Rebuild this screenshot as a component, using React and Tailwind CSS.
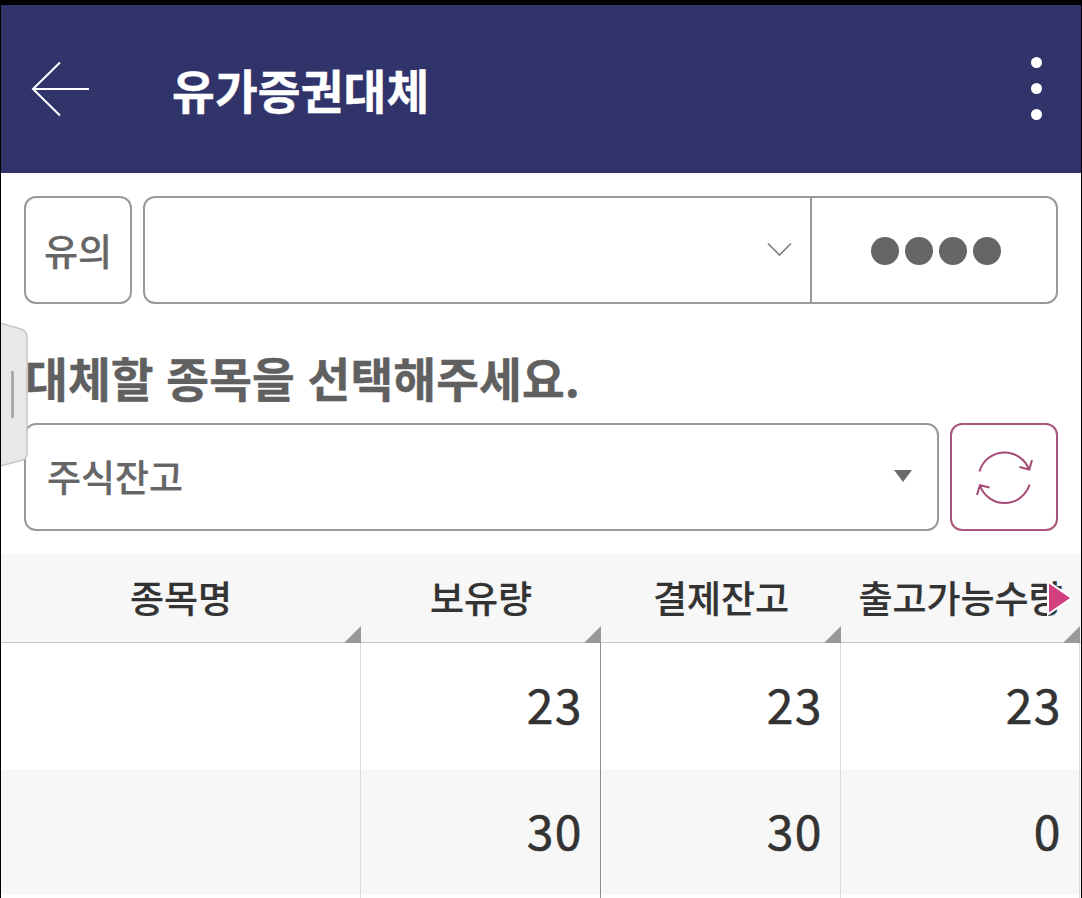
const COLUMNS = [
  { key: 'name', label: '종목명', line: 'border-[#d9d9d9]' },
  { key: 'held', label: '보유량', line: 'border-[#8e8e8e]' },
  { key: 'settled', label: '결제잔고', line: 'border-[#d9d9d9]' },
  { key: 'available', label: '출고가능수량', line: 'border-[#d9d9d9]' },
]

const ROWS = [
  { name: '', held: 23, settled: 23, available: 23 },
  { name: '', held: 30, settled: 30, available: 0 },
  { name: '', held: '', settled: '', available: '' },
]

function Header() {
  return (
    <header className="flex h-[168px] shrink-0 items-center bg-[#31346a] pl-[30px] pr-[39px]">
      <button aria-label="뒤로">
        <svg width="60" height="58" viewBox="0 0 60 58" fill="none" stroke="#fff" strokeWidth="2">
          <path d="M29 2.500 2 29 29 55.500M2 29h56" />
        </svg>
      </button>
      <h1 className="ml-[81px] text-[46.5px] leading-[60px] font-bold tracking-[0.1px] text-white [-webkit-text-stroke:0.4px]">유가증권대체</h1>
      <button aria-label="메뉴" className="-mt-[2px] ml-auto flex flex-col gap-[15px]">
        <span className="size-[11px] rounded-full bg-white" />
        <span className="size-[11px] rounded-full bg-white" />
        <span className="size-[11px] rounded-full bg-white" />
      </button>
    </header>
  )
}

function AccountBar() {
  return (
    <div className="flex h-[108px] gap-[11px]">
      <button className="flex w-[108px] items-center justify-center rounded-xl border-2 border-[#999] pt-[2px] text-[37px] font-medium text-[#666] [-webkit-text-stroke:0.2px]">
        유의
      </button>
      <div className="flex flex-1 rounded-xl border-2 border-[#999]">
        <div className="flex flex-1 items-center justify-end border-r-2 border-[#999] pr-[18px]">
          <svg width="26" height="16" viewBox="0 0 26 16" fill="none" stroke="#808080" strokeWidth="1.7">
            <path d="M2 1.5 13.500 13 25 1.5" />
          </svg>
        </div>
        <div className="flex w-[244px] items-center justify-center gap-[6px] pt-[2px] pl-[3px]">
          {[0, 1, 2, 3].map(i => (
            <span key={i} className="size-[28px] rounded-full bg-[#666]" />
          ))}
        </div>
      </div>
    </div>
  )
}

function RefreshIcon() {
  return (
    <svg width="60" height="60" viewBox="0 0 60 60" fill="none" stroke="#a54a74" strokeWidth="2">
      <path d="M5.500 24.500A26 26 0 0 1 55 22.500M45.500 20 55.300 22.500 58 13" />
      <path d="M55.500 37.500A26 26 0 0 1 6 38.500M3 48 6 38.300 15.500 40.500" />
    </svg>
  )
}

function BalanceTable() {
  return (
    <div className="relative mt-[23px]">
      <div className="grid h-[89px] grid-cols-[360px_240px_240px_239px] border-b border-[#c8c8c8] bg-[#f7f7f7]">
        {COLUMNS.map(col => (
          <div key={col.key} className="relative flex items-center justify-center text-[37px] font-medium whitespace-nowrap text-[#333] [-webkit-text-stroke:0.2px]">
            {col.label}
            <span className="absolute right-0 -bottom-px size-[17px] bg-[#999] [clip-path:polygon(100%_0,100%_100%,0_100%)]" />
          </div>
        ))}
      </div>
      {ROWS.map((row, i) => (
        <div key={i} className="grid h-[126px] grid-cols-[360px_240px_240px_239px] even:bg-white odd:bg-[#f7f7f7] last-of-type:bg-white">
          {COLUMNS.map(col => (
            <div
              key={col.key}
              className={`flex items-center justify-end border-r pr-[17px] pb-[6px] text-[48px] tracking-[1.5px] text-[#333] [-webkit-text-stroke:0.6px] ${col.line}`}
            >
              {row[col.key]}
            </div>
          ))}
        </div>
      ))}
      <svg className="absolute top-[26px] right-[9px]" width="28" height="36" viewBox="0 0 28 36">
        <path d="M5 3.500 26 18 5 32.500z" fill="#d13f7e" stroke="#fff" strokeWidth="4" paintOrder="stroke" />
      </svg>
    </div>
  )
}

function DrawerHandle() {
  return (
    <svg className="absolute top-[317px] left-0" width="28" height="146" viewBox="0 0 28 146" fill="none">
      <path d="M-1 1 20 7Q26 9 26 15V131Q26 136.500 22 138L-1 144z" fill="#e8e8e8" stroke="#c6c6c6" strokeWidth="1.500" />
      <path d="M11.500 50V95" stroke="#a3a3a3" strokeWidth="2.600" strokeLinecap="round" />
    </svg>
  )
}

export default function App() {
  return (
    <div className="h-[898px] w-[1082px] overflow-hidden border-x border-t-[5px] border-black bg-white font-['Noto_Sans_CJK_KR',sans-serif]">
      <div className="relative flex h-full flex-col">
        <Header />
        <main className="px-[23px] pt-[23px]">
          <AccountBar />
          <h2 className="mt-[43px] h-[60px] pl-px text-[46.5px] leading-[60px] font-bold tracking-[0.1px] [word-spacing:2px] text-[#606060] [-webkit-text-stroke:0.4px]">
            대체할 종목을 선택해주세요.
          </h2>
          <div className="mt-[16px] flex h-[108px] gap-[11px]">
            <div className="flex flex-1 items-center justify-between rounded-xl border-2 border-[#999] pr-[25px] pl-[21px] text-[37px] font-medium text-[#666] [-webkit-text-stroke:0.2px]">
              주식잔고
              <span className="mb-[2px] h-[12px] w-[18px] bg-[#6b6b6b] [clip-path:polygon(0_0,100%_0,50%_100%)]" />
            </div>
            <button aria-label="새로고침" className="flex w-[108px] items-center justify-center rounded-xl border-2 border-[#a8567d]">
              <RefreshIcon />
            </button>
          </div>
        </main>
        <BalanceTable />
        <DrawerHandle />
      </div>
    </div>
  )
}
